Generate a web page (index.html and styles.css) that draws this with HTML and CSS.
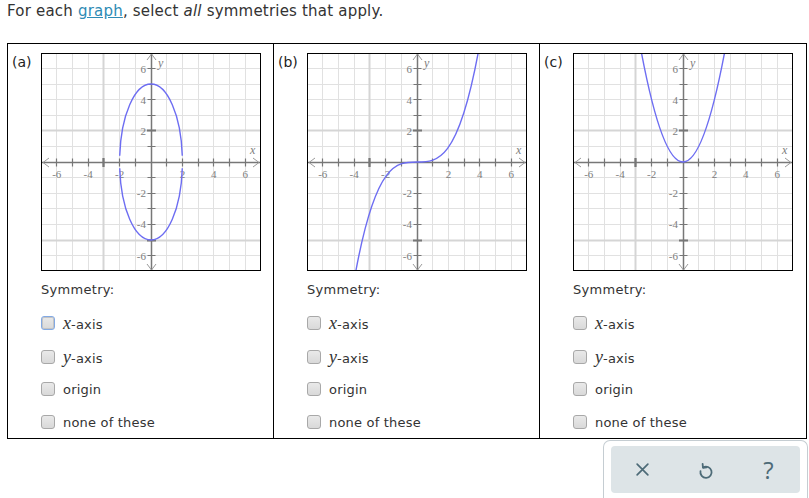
FILE: index.html
```html
<!DOCTYPE html>
<html>
<head>
<meta charset="utf-8">
<link rel="stylesheet" href="styles.css">
</head>
<body>
<svg class="defs" aria-hidden="true">
  <defs>
    <g id="grid">
      <path class="g-minor" d="M15.5 0V218M31.5 0V218M47.5 0V218M62.5 0V218M78.5 0V218M94.5 0V218M125.5 0V218M141.5 0V218M157.5 0V218M172.5 0V218M188.5 0V218M204.5 0V218M0 15.5H220M0 31.5H220M0 46.5H220M0 62.5H220M0 77.5H220M0 93.5H220M0 124.5H220M0 140.5H220M0 155.5H220M0 171.5H220M0 187.5H220M0 202.5H220"/>
      <path class="g-thick" d="M62.5 0V218M0 77.5H220M0 187.5H220"/>
      <path class="g-axis" d="M0 109.5H220M110.5 0V218"/>
      <path class="g-tick" d="M15.5 105.5V113.5M31.5 105.5V113.5M47.5 105.5V113.5M62.5 105.5V113.5M78.5 105.5V113.5M94.5 105.5V113.5M125.5 105.5V113.5M141.5 105.5V113.5M157.5 105.5V113.5M172.5 105.5V113.5M188.5 105.5V113.5M204.5 105.5V113.5M106.5 15.5H114.5M106.5 31.5H114.5M106.5 46.5H114.5M106.5 62.5H114.5M106.5 77.5H114.5M106.5 93.5H114.5M106.5 124.5H114.5M106.5 140.5H114.5M106.5 155.5H114.5M106.5 171.5H114.5M106.5 187.5H114.5M106.5 202.5H114.5"/>
      <path class="g-tick-thick" d="M62.5 105V114M106 77.5H115M106 187.5H115"/>
      <path class="g-arrow" d="M8 105L2 109.5L8 114M212 105L218 109.5L212 114M106 7L110.5 1L115 7M106 211L110.5 217L115 211"/>
      <text class="g-num" x="15.8" y="125">-6</text>
      <text class="g-num" x="47.2" y="125">-4</text>
      <text class="g-num" x="78.6" y="125">-2</text>
      <text class="g-num" x="141.4" y="125">2</text>
      <text class="g-num" x="172.8" y="125">4</text>
      <text class="g-num" x="204.2" y="125">6</text>
      <text class="g-num g-end" x="105" y="19.5">6</text>
      <text class="g-num g-end" x="105" y="50.6">4</text>
      <text class="g-num g-end" x="105" y="81.8">2</text>
      <text class="g-num g-end" x="105" y="144.2">-2</text>
      <text class="g-num g-end" x="105" y="175.4">-4</text>
      <text class="g-num g-end" x="105" y="206.6">-6</text>
      <text class="g-var" x="209" y="101">x</text>
      <text class="g-var" x="117" y="14">y</text>
    </g>
  </defs>
</svg>

<p class="prompt">For each <a href="#">graph</a>, select <i>all</i> symmetries that apply.</p>

<div class="panels">
  <div class="cell">
    <div class="tag">(a)</div>
    <div class="col">
      <svg class="graph" width="220" height="218" viewBox="0 0 220 218">
        <use href="#grid"/>
        <path class="curve" d="M78.7 102.8A31.4 78 0 0 1 141.3 102.8M78.7 115.2A31.4 78 0 0 0 141.3 115.2"/>
        <rect class="frame" x="0.5" y="0.5" width="219" height="217"/>
      </svg>
      <div class="sym">Symmetry:</div>
      <ul class="opts">
        <li class="opt math"><input type="checkbox" class="box focus"><span><span class="mv">x</span>-axis</span></li>
        <li class="opt math"><input type="checkbox" class="box"><span><span class="mv">y</span>-axis</span></li>
        <li class="opt"><input type="checkbox" class="box"><span>origin</span></li>
        <li class="opt"><input type="checkbox" class="box"><span>none of these</span></li>
      </ul>
    </div>
  </div>
  <div class="cell">
    <div class="tag">(b)</div>
    <div class="col">
      <svg class="graph" width="220" height="218" viewBox="0 0 220 218">
        <use href="#grid"/>
        <path class="curve" d="M48.8 218.2C89.6 -0.2 130.4 218.2 171.2 -0.2"/>
        <rect class="frame" x="0.5" y="0.5" width="219" height="217"/>
      </svg>
      <div class="sym">Symmetry:</div>
      <ul class="opts">
        <li class="opt math"><input type="checkbox" class="box"><span><span class="mv">x</span>-axis</span></li>
        <li class="opt math"><input type="checkbox" class="box"><span><span class="mv">y</span>-axis</span></li>
        <li class="opt"><input type="checkbox" class="box"><span>origin</span></li>
        <li class="opt"><input type="checkbox" class="box"><span>none of these</span></li>
      </ul>
    </div>
  </div>
  <div class="cell">
    <div class="tag">(c)</div>
    <div class="col">
      <svg class="graph" width="220" height="218" viewBox="0 0 220 218">
        <use href="#grid"/>
        <path class="curve" d="M68.4 -0.5Q110 218.5 151.6 -0.5"/>
        <rect class="frame" x="0.5" y="0.5" width="219" height="217"/>
      </svg>
      <div class="sym">Symmetry:</div>
      <ul class="opts">
        <li class="opt math"><input type="checkbox" class="box"><span><span class="mv">x</span>-axis</span></li>
        <li class="opt math"><input type="checkbox" class="box"><span><span class="mv">y</span>-axis</span></li>
        <li class="opt"><input type="checkbox" class="box"><span>origin</span></li>
        <li class="opt"><input type="checkbox" class="box"><span>none of these</span></li>
      </ul>
    </div>
  </div>
</div>

<div class="actions">
  <div class="btns">
    <div class="btn" title="Clear">
      <svg class="ico" width="15" height="15" viewBox="0 0 14 14"><path d="M2 2L12 12M12 2L2 12"/></svg>
    </div>
    <div class="btn" title="Reset">
      <svg class="ico" width="18" height="18" viewBox="0 0 16 16"><path d="M3.1 9A5 5 0 1 0 5.5 5.67"/><path d="M5 2.6L5.3 6L8.6 5.7"/></svg>
    </div>
    <div class="btn" title="Help"><span class="qmark">?</span></div>
  </div>
</div>
</body>
</html>
```

FILE: styles.css
```css
html, body {
  margin: 0;
  height: 100%;
  overflow: hidden;
  background: #fff;
}
body {
  padding-left: 7px;
  font-family: "DejaVu Sans", Verdana, sans-serif;
  color: #333;
}
.defs {
  position: absolute;
  width: 0;
  height: 0;
  overflow: hidden;
}
.prompt {
  margin: 2px 0 23px;
  font-size: 15px;
  line-height: 18px;
  letter-spacing: 0.2px;
  color: #333;
}
.prompt a {
  color: #2e8bb5;
  text-decoration: underline;
}
.panels {
  display: grid;
  grid-template-columns: repeat(3, 266px);
  width: 800px;
  box-sizing: border-box;
  border: 1px solid #000;
}
.cell {
  display: flex;
  padding: 9px 0 6px 4px;
  border-right: 1px solid #000;
}
.cell:last-child {
  border-right: 0;
}
.tag {
  flex: none;
  width: 29px;
  margin-top: 1px;
  font-size: 14px;
  line-height: 16px;
  color: #222;
}
.col {
  display: flex;
  flex-direction: column;
}
.graph {
  display: block;
}
.g-minor { fill: none; stroke: #e1e1e1; stroke-width: 1; }
.g-thick { fill: none; stroke: #d5d5d5; stroke-width: 2; }
.g-axis { fill: none; stroke: #777; stroke-width: 1.5; }
.g-tick { fill: none; stroke: #777; stroke-width: 1.2; }
.g-tick-thick { fill: none; stroke: #777; stroke-width: 2.2; }
.g-arrow { fill: none; stroke: #9a9a9a; stroke-width: 1; }
.g-num {
  font-family: "Liberation Serif", serif;
  font-size: 11px;
  fill: #7d7d7d;
  text-anchor: middle;
}
.g-end { text-anchor: end; }
.g-var {
  font-family: "Liberation Serif", serif;
  font-style: italic;
  font-size: 12px;
  fill: #7d7d7d;
}
.curve { fill: none; stroke: #6d6df2; stroke-width: 1.4; }
.frame { fill: none; stroke: #000; stroke-width: 1; }
.sym {
  margin-top: 10px;
  font-size: 13px;
  line-height: 18px;
  letter-spacing: 0.3px;
}
.opts {
  list-style: none;
  margin: 12px 0 0;
  padding: 0;
  display: flex;
  flex-direction: column;
  gap: 10px;
}
.opt {
  display: flex;
  align-items: center;
  height: 20px;
  font-size: 13px;
  letter-spacing: 0.2px;
}
.opt.math {
  height: 24px;
}
.opt:last-child {
  margin-top: 3px;
}
.box {
  -webkit-appearance: none;
  appearance: none;
  flex: none;
  width: 14px;
  height: 14px;
  margin: 0 8px 0 0;
  box-sizing: border-box;
  border: 1px solid #a8a8a8;
  border-radius: 3px;
  background: linear-gradient(#e9e9e9, #d9d9d9);
}
.box.focus {
  border-color: #82a9e4;
  box-shadow: inset 0 0 0 1px #c4c4c4;
}
.mv {
  font-family: "Liberation Serif", serif;
  font-style: italic;
  font-size: 18px;
  letter-spacing: 0;
}
.actions {
  margin: 1px 0 0 596px;
  width: 205px;
  box-sizing: border-box;
  border: 1px solid #c5cdd2;
  border-bottom: 0;
  border-radius: 7px 7px 0 0;
  padding: 5px 7px;
}
.btns {
  display: flex;
  height: 47px;
  background: #dde4e7;
  border-radius: 4px;
}
.btn {
  flex: 1;
  display: flex;
  align-items: center;
  justify-content: center;
  color: #4d6b78;
}
.ico {
  display: block;
  fill: none;
  stroke: currentColor;
  stroke-width: 1.6;
  stroke-linecap: round;
  stroke-linejoin: round;
}
.qmark {
  font-family: "Open Sans", sans-serif;
  font-size: 24px;
  line-height: 24px;
}
```
